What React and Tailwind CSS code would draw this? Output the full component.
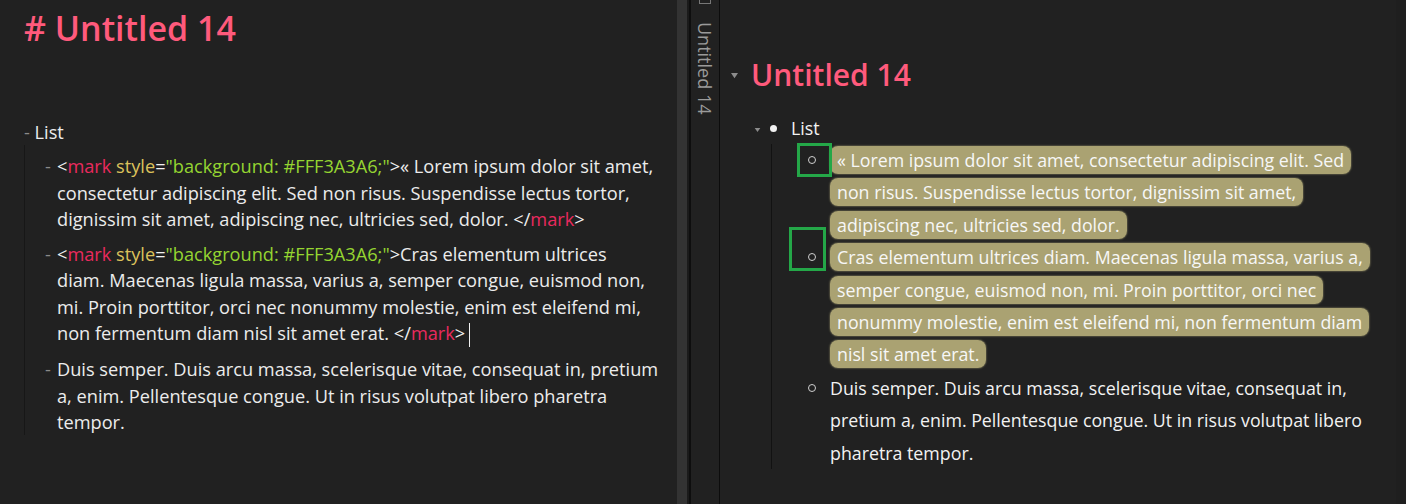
import React from "react";

const font = { fontFamily: '"Open Sans", "Noto Sans", sans-serif' };

function Tag({ close, children }) {
  return (
    <>
      <span className="text-[#f2f2f2]">{close ? "</" : "<"}</span>
      <span className="text-[#ea2a5e]">mark</span>
      {children}
      <span className="text-[#f2f2f2]">&gt;</span>
    </>
  );
}

function OpenMark() {
  return (
    <Tag>
      {" "}
      <span className="text-[#dcc25c]">style</span>
      <span className="text-[#f2f2f2]">=</span>
      <span className="text-[#95d531]">"background: #FFF3A3A6;"</span>
    </Tag>
  );
}

function SourceItem({ className = "", children }) {
  return (
    <div className={"flex " + className}>
      <span className="w-[12px] shrink-0 text-[#8a8a8a]">-</span>
      <div className="min-w-0">{children}</div>
    </div>
  );
}

function SourcePane() {
  return (
    <div className="w-[677px] shrink-0 h-full pl-6 pt-[6px]">
      <h1 className="text-[34px] leading-[44px] font-semibold text-[#ff5a7c]"># Untitled 14</h1>
      <div className="mt-[69px] text-[18.2px] leading-[26.3px] text-[#ececec]">
        <div>
          <span className="text-[#8a8a8a]">-</span> List
        </div>
        <div className="w-[639px] border-l border-[#171717] pt-[8px] pl-[20px] flex flex-col gap-[9px]">
          <SourceItem>
            <OpenMark />« Lorem ipsum dolor sit amet, consectetur adipiscing elit. Sed non risus. Suspendisse lectus tortor, dignissim sit amet, adipiscing nec, ultricies sed, dolor. <Tag close />
          </SourceItem>
          <SourceItem className="pr-[7px]">
            <OpenMark />Cras elementum ultrices diam. Maecenas ligula massa, varius a, semper congue, euismod non, mi. Proin porttitor, orci nec nonummy molestie, enim est eleifend mi, non fermentum diam nisl sit amet erat. <Tag close />
            <span className="inline-block w-px h-[24px] align-middle bg-[#f0f0f0] ml-[4px]" />
          </SourceItem>
          <SourceItem>
            Duis semper. Duis arcu massa, scelerisque vitae, consequat in, pretium a, enim. Pellentesque congue. Ut in risus volutpat libero pharetra tempor.
          </SourceItem>
        </div>
      </div>
    </div>
  );
}

function Triangle({ className }) {
  return (
    <svg viewBox="0 0 10 8" className={className}>
      <path d="M1 1 L9 1 L5 7 Z" fill="#8c8c8c" />
    </svg>
  );
}

function Ring() {
  return <span className="w-[8px] h-[8px] rounded-full border-[1.5px] border-[#cfcfcf]" />;
}

function Highlight({ children }) {
  return (
    <mark className="bg-[#aaa272] text-[#f7f7f7] rounded-[8px] px-[7px] py-[2px] box-decoration-clone shadow-[0_0_2px_#aaa272]">
      {children}
    </mark>
  );
}

function PreviewItem({ children }) {
  return (
    <div className="flex">
      <div className="w-[58px] shrink-0 h-[32px] flex items-center justify-end pr-[14px]">
        <Ring />
      </div>
      <div className="w-[544px]">{children}</div>
    </div>
  );
}

function PreviewPane() {
  return (
    <div className="relative flex-1 h-full pt-[52px]">
      <div className="flex items-center h-[44px]">
        <Triangle className="w-[9px] h-[7px] ml-[10px] mr-[12px] mt-[2px]" />
        <h1 className="text-[30px] font-semibold text-[#ff5a7c]">Untitled 14</h1>
      </div>
      <div className="mt-[16px] text-[17.8px] leading-[32.4px] text-[#f2f2f2]">
        <div className="flex items-center h-[32px]">
          <Triangle className="w-[7px] h-[6px] ml-[34px] mr-[9px] mt-[3px]" />
          <span className="w-[7px] h-[7px] rounded-full bg-[#f2f2f2]" />
          <span className="ml-[14px]">List</span>
        </div>
        <div className="ml-[51px] border-l border-[#121212]">
          <PreviewItem>
            <Highlight>« Lorem ipsum dolor sit amet, consectetur adipiscing elit. Sed non risus. Suspendisse lectus tortor, dignissim sit amet, adipiscing nec, ultricies sed, dolor.</Highlight>
          </PreviewItem>
          <PreviewItem>
            <Highlight>Cras elementum ultrices diam. Maecenas ligula massa, varius a, semper congue, euismod non, mi. Proin porttitor, orci nec nonummy molestie, enim est eleifend mi, non fermentum diam nisl sit amet erat.</Highlight>
          </PreviewItem>
          <div className="pt-[1px]">
            <PreviewItem>
              Duis semper. Duis arcu massa, scelerisque vitae, consequat in, pretium a, enim. Pellentesque congue. Ut in risus volutpat libero pharetra tempor.
            </PreviewItem>
          </div>
        </div>
      </div>
      <div className="absolute left-[77px] top-[143px] w-[35px] h-[34px] border-[3px] border-[#24a748]" />
      <div className="absolute left-[69px] top-[227px] w-[37px] h-[44px] border-[3px] border-[#24a748]" />
    </div>
  );
}

export default function App() {
  return (
    <div className="flex w-[1406px] h-[504px] overflow-hidden bg-[#212121]" style={font}>
      <SourcePane />
      <div className="w-[10px] shrink-0 bg-[#333333]" />
      <div className="w-[2px] shrink-0 bg-[#1b1b1b]" />
      <div className="w-[2px] shrink-0 bg-[#0e0e0e]" />
      <div className="w-[29px] shrink-0 border-r border-[#0c0c0c] flex flex-col items-center">
        <span className="-mt-[8px] w-[12px] h-[12px] border border-[#777]" />
        <span className="mt-[18px] [writing-mode:vertical-rl] text-[18px] leading-[22px] text-[#9a9a9a]">Untitled 14</span>
      </div>
      <PreviewPane />
      <div className="w-[10px] shrink-0 bg-[#1f1f1f]" />
    </div>
  );
}
